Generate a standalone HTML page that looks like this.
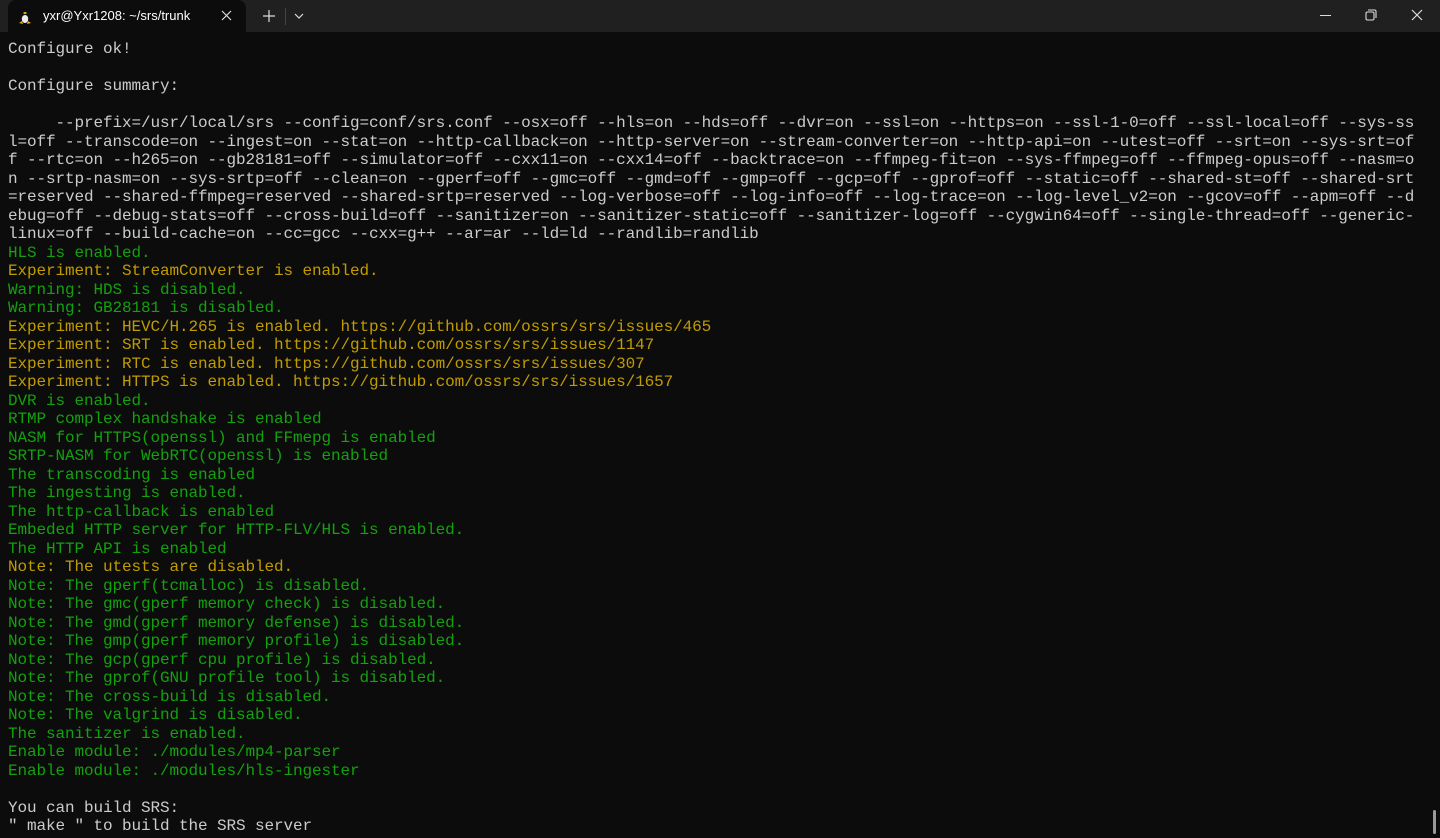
<!DOCTYPE html>
<html><head><meta charset="utf-8"><style>
html,body{margin:0;padding:0;width:1440px;height:838px;overflow:hidden;background:#0c0c0c;}
.bar{position:absolute;left:0;top:0;width:1440px;height:32px;background:#202020;}
.tab{position:absolute;left:8px;top:0;width:238px;height:32px;background:#0c0c0c;border-radius:8px 8px 0 0;}
.title{position:absolute;left:43px;top:8px;font:13px "Liberation Sans",sans-serif;color:#fff;}
pre{position:absolute;left:8px;top:40px;margin:0;font:16px/18.5px "Liberation Mono",monospace;letter-spacing:-0.1px;color:#cccccc;white-space:pre;}
.g{color:#13a10e}.y{color:#c19c00}
.sb{position:absolute;left:1433px;top:810px;width:3px;height:24px;background:#9a9a9a;border-radius:2px;}
</style></head><body>
<div class="bar"><div class="tab"></div>
<svg style="position:absolute;left:17px;top:8px" width="16" height="17" viewBox="0 0 16 17"><ellipse cx="8" cy="9" rx="5" ry="6.5" fill="#111"/><ellipse cx="8" cy="11" rx="3.2" ry="4" fill="#eee"/><ellipse cx="8" cy="5" rx="1.6" ry="1" fill="#f0b400"/><path d="M2 15 L5 13 L6 16 Z M14 15 L11 13 L10 16 Z" fill="#f0b400"/></svg>
<div class="title">yxr@Yxr1208: ~/srs/trunk</div>
<svg style="position:absolute;left:221px;top:10px" width="11" height="11"><path d="M1 1L10 10M10 1L1 10" stroke="#ddd" stroke-width="1.2"/></svg>
<svg style="position:absolute;left:263px;top:10px" width="12" height="12"><path d="M6 0V12M0 6H12" stroke="#ddd" stroke-width="1.2"/></svg>
<div style="position:absolute;left:285px;top:8px;width:1px;height:17px;background:#444"></div>
<svg style="position:absolute;left:294px;top:13px" width="10" height="6"><path d="M1 1L5 5L9 1" stroke="#ddd" stroke-width="1.2" fill="none"/></svg>
<div style="position:absolute;left:1320px;top:15px;width:11px;height:1px;background:#ddd"></div>
<svg style="position:absolute;left:1365px;top:9px" width="12" height="12"><rect x="1" y="3" width="8" height="8" rx="1.5" stroke="#ddd" fill="none" stroke-width="1.1"/><path d="M3 1H9.5Q11 1 11 2.5V9" stroke="#ddd" fill="none" stroke-width="1.1"/></svg>
<svg style="position:absolute;left:1411px;top:9px" width="12" height="12"><path d="M1 1L11 11M11 1L1 11" stroke="#ddd" stroke-width="1.2"/></svg>
</div>
<pre>Configure ok!

Configure summary:

     --prefix=/usr/local/srs --config=conf/srs.conf --osx=off --hls=on --hds=off --dvr=on --ssl=on --https=on --ssl-1-0=off --ssl-local=off --sys-ss
l=off --transcode=on --ingest=on --stat=on --http-callback=on --http-server=on --stream-converter=on --http-api=on --utest=off --srt=on --sys-srt=of
f --rtc=on --h265=on --gb28181=off --simulator=off --cxx11=on --cxx14=off --backtrace=on --ffmpeg-fit=on --sys-ffmpeg=off --ffmpeg-opus=off --nasm=o
n --srtp-nasm=on --sys-srtp=off --clean=on --gperf=off --gmc=off --gmd=off --gmp=off --gcp=off --gprof=off --static=off --shared-st=off --shared-srt
=reserved --shared-ffmpeg=reserved --shared-srtp=reserved --log-verbose=off --log-info=off --log-trace=on --log-level_v2=on --gcov=off --apm=off --d
ebug=off --debug-stats=off --cross-build=off --sanitizer=on --sanitizer-static=off --sanitizer-log=off --cygwin64=off --single-thread=off --generic-
linux=off --build-cache=on --cc=gcc --cxx=g++ --ar=ar --ld=ld --randlib=randlib
<span class="g">HLS is enabled.</span>
<span class="y">Experiment: StreamConverter is enabled.</span>
<span class="g">Warning: HDS is disabled.</span>
<span class="g">Warning: GB28181 is disabled.</span>
<span class="y">Experiment: HEVC/H.265 is enabled. https://github.com/ossrs/srs/issues/465</span>
<span class="y">Experiment: SRT is enabled. https://github.com/ossrs/srs/issues/1147</span>
<span class="y">Experiment: RTC is enabled. https://github.com/ossrs/srs/issues/307</span>
<span class="y">Experiment: HTTPS is enabled. https://github.com/ossrs/srs/issues/1657</span>
<span class="g">DVR is enabled.
RTMP complex handshake is enabled
NASM for HTTPS(openssl) and FFmepg is enabled
SRTP-NASM for WebRTC(openssl) is enabled
The transcoding is enabled
The ingesting is enabled.
The http-callback is enabled
Embeded HTTP server for HTTP-FLV/HLS is enabled.
The HTTP API is enabled</span>
<span class="y">Note: The utests are disabled.</span>
<span class="g">Note: The gperf(tcmalloc) is disabled.
Note: The gmc(gperf memory check) is disabled.
Note: The gmd(gperf memory defense) is disabled.
Note: The gmp(gperf memory profile) is disabled.
Note: The gcp(gperf cpu profile) is disabled.
Note: The gprof(GNU profile tool) is disabled.
Note: The cross-build is disabled.
Note: The valgrind is disabled.
The sanitizer is enabled.
Enable module: ./modules/mp4-parser
Enable module: ./modules/hls-ingester</span>

You can build SRS:
" make " to build the SRS server</pre>
<div class="sb"></div>
</body></html>
